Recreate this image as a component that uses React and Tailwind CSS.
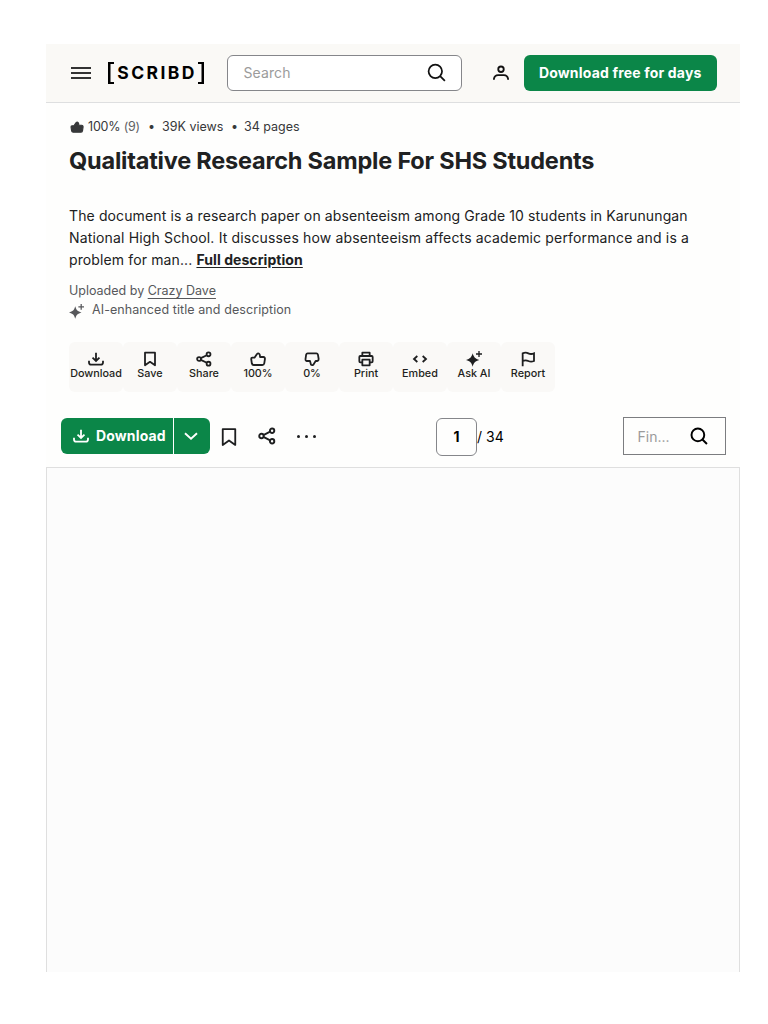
import React from "react";

function Icon({ children, className, strokeWidth = 2 }) {
  return (
    <svg viewBox="0 0 24 24" fill="none" stroke="currentColor" strokeWidth={strokeWidth} className={`shrink-0 ${className}`}>
      {children}
    </svg>
  );
}

const download = (
  <>
    <path d="M12 2.5v12.2M6.8 10l5.2 5 5.2-5" />
    <path d="M1.500 14.500v2.700q0 3.300 3.300 3.300h14.400q3.300 0 3.300-3.300v-2.700" />
  </>
);
const bookmark = <path d="M4.500 2.500h15v19L12 16.200 4.500 21.500z" strokeLinejoin="round" />;
const share = (
  <>
    <circle cx="4.600" cy="12" r="2.900" />
    <circle cx="18.800" cy="5" r="2.900" />
    <circle cx="18.800" cy="19" r="2.900" />
    <path d="M7.200 10.700l9-4.400M7.200 13.300l9 4.400" />
  </>
);
const thumb = (
  <path d="M3.500 10h3.200L10.500 4.500q1.800-2 3.500 0 1.200 1.500 1 4.500h5q2.700.3 2.400 3l-1 6.500q-.5 2.500-3 2.500H5.500q-2.200 0-2.700-2.200L1.800 12q-.1-1.800 1.700-2z" strokeLinejoin="round" />
);
const thumbDown = (
  <path d="M5.500 3.500h13q2 0 2.400 2l1.100 6.500q.2 2.500-2.300 3h-2.200l-3.500 5.500q-2 1.500-3.500 0L9 15H4q-2-.3-1.800-2.500l1-7q.4-2 2.300-2z" strokeLinejoin="round" />
);
const search = (
  <>
    <circle cx="10.500" cy="10.500" r="8.500" />
    <path d="M16.600 16.600l6 6" />
  </>
);
const printer = (
  <>
    <path d="M6.500 7.500V2.500h11v5M6.500 17h-3q-1.500 0-1.500-1.500V9q0-1.500 1.500-1.500h17q1.500 0 1.500 1.500v6.500q0 1.500-1.500 1.500h-3" strokeLinejoin="round" />
    <path d="M6.500 13h11v8.500h-11z" strokeLinejoin="round" />
  </>
);
const code = <path d="M8 7.500l-5 4.500 5 4.500M16 7.500l5 4.500-5 4.500" />;
const sparkle = (
  <g fill="currentColor" stroke="none">
    <path d="M10 3.500c1.800 6.200 3.800 8.200 10 10-6.200 1.800-8.200 3.800-10 10-1.800-6.200-3.800-8.200-10-10 6.200-1.800 8.200-3.800 10-10z" />
    <path d="M18.500 0h2v3.500H24v2h-3.500V9h-2V5.500H15v-2h3.500z" />
  </g>
);
const flag = <path d="M4 23V3.500q4.500-2 8.500 0t8.500 0v11.500q-4.500 2-8.500 0T4 15" />;

const actions = [
  { label: "Download", icon: download },
  { label: "Save", icon: bookmark },
  { label: "Share", icon: share },
  { label: "100%", icon: thumb },
  { label: "0%", icon: thumbDown },
  { label: "Print", icon: printer },
  { label: "Embed", icon: code },
  { label: "Ask AI", icon: sparkle },
  { label: "Report", icon: flag },
];

function Header() {
  return (
    <header className="flex h-[59px] items-center border-b border-[#dedfe0] bg-[#faf9f6] pl-[25px] pr-[23.500px] pb-px">
      <button className="flex w-5 flex-col gap-[3px]" aria-label="Menu">
        <span className="h-[2px] bg-[#333]" />
        <span className="h-[2px] bg-[#333]" />
        <span className="h-[2px] bg-[#333]" />
      </button>
      <div className="ml-[17px] flex h-[22px] w-[96px] items-center justify-between text-black">
        <span className="h-[22px] w-[6px] shrink-0 border-2 border-r-0 border-black shadow-[inset_0.500px_0_0_#000]" />
        <span className="-mr-[2px] text-[17.500px] font-bold leading-none tracking-[2.400px]">SCRIBD</span>
        <span className="h-[22px] w-[6px] shrink-0 border-2 border-l-0 border-black shadow-[inset_-0.500px_0_0_#000]" />
      </div>
      <div className="ml-[23px] flex h-9 w-[235px] items-center justify-between rounded-[6px] border border-[#85868a] bg-white pl-[15.500px] pr-[15px]">
        <span className="text-[14px] tracking-[0.100px] text-[#9b9b9b]">Search</span>
        <Icon className="h-[19px] w-[19px] text-[#111]" strokeWidth={2.200}>{search}</Icon>
      </div>
      <Icon className="ml-[29px] h-5 w-5 text-[#111]" strokeWidth={2.200}>
        <circle cx="12" cy="7.500" r="3.300" />
        <path d="M3.500 20v-1q.8-4.500 5-4.500h7q4.200 0 5 4.500v1" />
      </Icon>
      <button className="ml-auto h-9 w-[192.500px] whitespace-nowrap rounded-[6px] bg-[#0b8648] pb-px text-[14px] font-bold tracking-[0.180px] text-white">
        Download free for days
      </button>
    </header>
  );
}

export default function App() {
  return (
    <div className="h-[1024px] w-[768px] bg-white pl-[46px] pt-[44px] font-['Inter','Liberation_Sans',sans-serif]">
      <main className="flex h-[928px] w-[694px] flex-col overflow-hidden bg-[#fefefd] text-[#202122]">
        <Header />
        <section className="pl-[23px]">
          <div className="mt-[14px] flex h-[20px] items-center whitespace-pre text-[12.500px] text-[#37383a]">
            <Icon className="ml-[1px] mr-[4px] h-[14px] w-[14px]"><g fill="currentColor">{thumb}</g></Icon>
            <span className="w-[60px] tracking-[-0.200px]">100% <span className="text-[#606164]">(9)</span></span>
            <span className="w-[14px]">•</span>
            <span className="w-[69px]">39K views</span>
            <span className="w-[13px]">•</span>
            <span>34 pages</span>
          </div>
          <h1 className="mt-[8px] whitespace-nowrap text-[23.500px] font-bold leading-8 tracking-[-0.210px]">Qualitative Research Sample For SHS Students</h1>
          <p className="mt-[28px] whitespace-nowrap text-[14px] leading-[22px] tracking-[0.120px]">
            <span className="block">The document is a research paper on absenteeism among Grade 10 students in Karunungan</span>
            <span className="block tracking-[0.155px]">National High School. It discusses how absenteeism affects academic performance and is a</span>
            <span className="block">problem for man... <a className="font-bold tracking-[0.070px] underline underline-offset-2">Full description</a></span>
          </p>
          <div className="mt-[10px] text-[12.500px] leading-5 text-[#57585b]">
            Uploaded by <a className="underline underline-offset-[3px]">Crazy Dave</a>
          </div>
          <div className="flex h-[18px] items-center text-[12.500px] tracking-[0.080px] text-[#57585b]">
            <Icon className="mr-2 mt-[2px] h-[15px] w-[15px]">{sparkle}</Icon>
            AI-enhanced title and description
          </div>
          <div className="mt-[23px] flex">
            {actions.map((a) => (
              <button key={a.label} className="flex h-[50px] w-[54px] flex-col items-center rounded-[6px] bg-[#faf9f7] pt-[9px] text-[#1e1f20]">
                <Icon className="h-4 w-4" strokeWidth={2.700}>{a.icon}</Icon>
                <span className="text-[10.800px] font-medium leading-[13px]">{a.label}</span>
              </button>
            ))}
          </div>
        </section>
        <div className="mt-[25px] flex h-[38px] items-center pl-[15px] pr-[14.500px]">
          <button className="flex h-9 w-[113px] items-center rounded-l-[6px] border-r border-white bg-[#0b8648] pb-px pl-[12px] text-[14px] font-bold tracking-[0.150px] text-white">
            <Icon className="mr-[7px] h-4 w-4" strokeWidth={2.700}>{download}</Icon>
            Download
          </button>
          <button className="flex h-9 w-[36px] items-center justify-center rounded-r-[6px] bg-[#0b8648] text-white" aria-label="More formats">
            <Icon className="mr-[3px] h-4 w-4" strokeWidth={2.900}><path d="M3 8l9 8 9-8" /></Icon>
          </button>
          <Icon className="ml-[9px] mt-px h-5 w-5 text-[#1e1f20]" strokeWidth={2.200}>{bookmark}</Icon>
          <Icon className="ml-[19px] h-[18px] w-[18px] text-[#1e1f20]" strokeWidth={2.600}>{share}</Icon>
          <div className="ml-[21px] flex gap-[5px]">
            <span className="h-[3px] w-[3px] rounded-full bg-[#1e1f20]" />
            <span className="h-[3px] w-[3px] rounded-full bg-[#1e1f20]" />
            <span className="h-[3px] w-[3px] rounded-full bg-[#1e1f20]" />
          </div>
          <div className="ml-[120px] mt-px flex h-[38px] w-[41px] shrink-0 items-center justify-center rounded-[6px] border border-[#85868a] pb-px text-[14px] font-bold text-black">1</div>
          <span className="whitespace-nowrap text-[14px] text-black">/ 34</span>
          <div className="ml-auto flex h-[38px] w-[103px] items-center justify-between border border-[#7c7d80] pl-[14px] pr-[17px]">
            <span className="text-[14px] text-[#9b9b9b]">Fin...</span>
            <Icon className="h-[18px] w-[18px] text-black" strokeWidth={2.600}>{search}</Icon>
          </div>
        </div>
        <div className="mt-[12px] flex-1 border border-b-0 border-[#dfdfdf] bg-[#fcfcfc]" />
      </main>
    </div>
  );
}
